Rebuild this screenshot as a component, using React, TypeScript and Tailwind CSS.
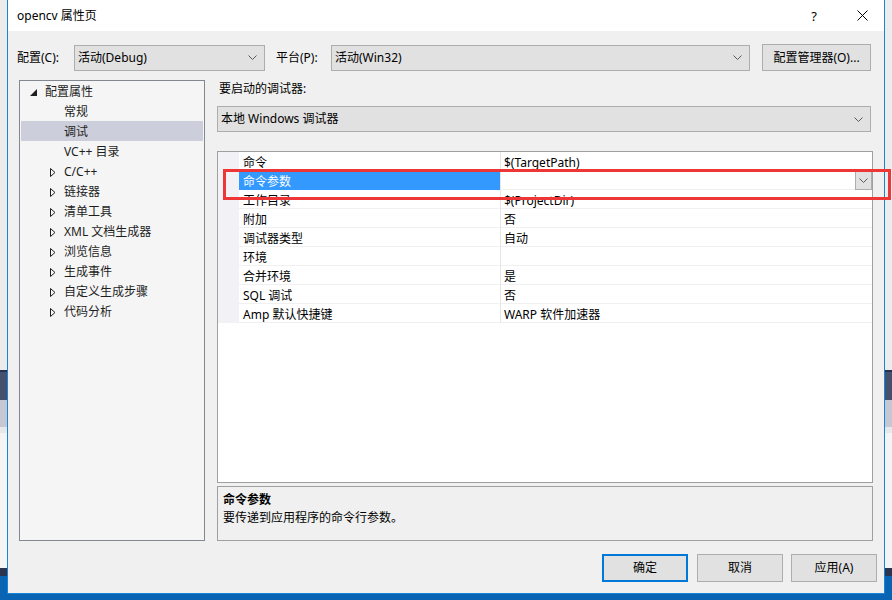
import React from "react";

const Chevron = () => (
  <svg width="9" height="5" viewBox="0 0 9 5" className="block">
    <polyline points="0.5,0.5 4.5,4.5 8.5,0.5" fill="none" stroke="#5a5a5a" strokeWidth="1" />
  </svg>
);

const Expanded = () => (
  <svg width="7" height="7" viewBox="0 0 7 7" className="block">
    <polygon points="7,0 7,7 0,7" fill="#1e1e1e" />
  </svg>
);

const Collapsed = () => (
  <svg width="6" height="9" viewBox="0 0 6 9" className="block">
    <polygon points="0.5,0.5 5,4.5 0.5,8.5" fill="none" stroke="#1e1e1e" strokeWidth="1" />
  </svg>
);

const treeItems: { label: string; kind: "exp" | "col" | "none"; selected?: boolean }[] = [
  { label: "配置属性", kind: "exp" },
  { label: "常规", kind: "none" },
  { label: "调试", kind: "none", selected: true },
  { label: "VC++ 目录", kind: "none" },
  { label: "C/C++", kind: "col" },
  { label: "链接器", kind: "col" },
  { label: "清单工具", kind: "col" },
  { label: "XML 文档生成器", kind: "col" },
  { label: "浏览信息", kind: "col" },
  { label: "生成事件", kind: "col" },
  { label: "自定义生成步骤", kind: "col" },
  { label: "代码分析", kind: "col" },
];

const props: { name: string; value: string; selected?: boolean }[] = [
  { name: "命令", value: "$(TargetPath)" },
  { name: "命令参数", value: "", selected: true },
  { name: "工作目录", value: "$(ProjectDir)" },
  { name: "附加", value: "否" },
  { name: "调试器类型", value: "自动" },
  { name: "环境", value: "" },
  { name: "合并环境", value: "是" },
  { name: "SQL 调试", value: "否" },
  { name: "Amp 默认快捷键", value: "WARP 软件加速器" },
];

export default function App() {
  return (
    <div className="relative w-[892px] h-[600px] overflow-hidden font-['Noto_Sans','Noto_Sans_CJK_SC',sans-serif] text-[12px] leading-4 text-black">
      {/* desktop / IDE behind */}
      <div className="flex flex-col w-full h-full">
        <div className="h-[370px] bg-[#ececec]" />
        <div className="h-[2px] bg-[#26314b]" />
        <div className="h-[28px] bg-[#44506e]" />
        <div className="h-[27px] bg-[#c5c8d2]" />
        <div className="h-[6px] bg-[#e8e8e8]" />
        <div className="h-[135px] bg-[#f4f4f4]" />
        <div className="h-[8px] bg-[#2b3550]" />
        <div className="flex-1 bg-[#0a64b4]" />
      </div>

      {/* dialog window */}
      <div className="absolute left-[7px] top-0 w-[878px] h-[594px] border-x border-b border-[#1883d7] bg-[#f0f0f0] flex flex-col">
        {/* title bar */}
        <div className="h-[31px] bg-white flex items-center pl-[9px] shrink-0">
          <span className="flex-1">opencv 属性页</span>
          <span className="w-[10px] text-center text-[13px] mr-[38px]">?</span>
          <svg width="11" height="11" viewBox="0 0 11 11" className="mr-[16px]">
            <path d="M0.5,0.5 L10.5,10.5 M10.5,0.5 L0.5,10.5" stroke="#000" strokeWidth="1" />
          </svg>
        </div>

        {/* config row */}
        <div className="flex items-center mt-[13px] h-[27px] pl-[9px]">
          <span className="w-[57px]">配置(C):</span>
          <div className="w-[191px] h-[26px] bg-[#e1e1e1] border border-[#adadad] flex items-center pl-[3px] pr-[7px]">
            <span className="flex-1">活动(Debug)</span>
            <Chevron />
          </div>
          <span className="ml-[11px] w-[55px]">平台(P):</span>
          <div className="w-[419px] h-[26px] bg-[#e1e1e1] border border-[#adadad] flex items-center pl-[3px] pr-[7px]">
            <span className="flex-1">活动(Win32)</span>
            <Chevron />
          </div>
          <div className="ml-[12px] w-[109px] h-[27px] bg-[#e1e1e1] border border-[#adadad] flex items-center justify-center">
            配置管理器(O)...
          </div>
        </div>

        {/* main area */}
        <div className="flex mt-[9px] pl-[11px] h-[461px]">
          {/* tree */}
          <div className="w-[186px] h-full border border-[#828790] bg-[#f5f5f5] pt-0 px-px">
            {treeItems.map((t) => (
              <div
                key={t.label}
                className={
                  "h-[20px] flex items-center pt-[2px] text-[#1e1e1e] " + (t.selected ? "bg-[#cccedb]" : "")
                }
              >
                {t.kind === "exp" ? (
                  <>
                    <span className="w-[9px]" />
                    <Expanded />
                    <span className="w-[8px]" />
                  </>
                ) : t.kind === "col" ? (
                  <>
                    <span className="w-[29px]" />
                    <Collapsed />
                    <span className="w-[8px]" />
                  </>
                ) : (
                  <span className="w-[43px]" />
                )}
                <span>{t.label}</span>
              </div>
            ))}
          </div>

          {/* right side */}
          <div className="ml-[12px] w-[656px] flex flex-col">
            <div className="h-[26px] pl-[2px] pt-px">要启动的调试器:</div>
            <div className="w-[654px] h-[26px] bg-[#e1e1e1] border border-[#adadad] flex items-center pl-[3px] pr-[7px]">
              <span className="flex-1">本地 Windows 调试器</span>
              <Chevron />
            </div>

            {/* property grid */}
            <div className="mt-[19px] h-[332px] border border-[#a0a0a0] bg-white flex flex-col">
              {props.map((p) => (
                <div key={p.name} className="h-[19px] flex shrink-0">
                  <div className="w-[21px] bg-[#f2f2f6] shrink-0" />
                  <div
                    className={
                      "w-[261px] flex items-center pl-[4px] pt-[3px] border-b " +
                      (p.selected ? "bg-[#3399ff] text-white border-[#3399ff]" : "border-[#f0f0f0]")
                    }
                  >
                    {p.name}
                  </div>
                  <div className="flex-1 flex items-center pl-[3px] border-l border-b border-l-[#e6e6e6] border-b-[#f0f0f0]">
                    <span className="flex-1 pt-[3px]">{p.value}</span>
                    {p.selected && (
                      <div className="w-[17px] h-[19px] bg-[#e1e1e1] border border-[#adadad] flex items-center justify-center">
                        <Chevron />
                      </div>
                    )}
                  </div>
                </div>
              ))}
            </div>

            {/* description */}
            <div className="mt-[3px] h-[55px] border border-[#a0a0a0] bg-[#f0f0f0] pl-[5px] pt-[3px]">
              <div className="font-bold h-[19px] flex items-center">命令参数</div>
              <div className="h-[18px] flex items-center">要传递到应用程序的命令行参数。</div>
            </div>
          </div>
        </div>

        {/* buttons */}
        <div className="flex justify-end mt-[13px] pr-[7px] gap-[9px]">
          <div className="w-[86px] h-[28px] bg-[#e1e1e1] border-2 border-[#0078d7] flex items-center justify-center">确定</div>
          <div className="w-[86px] h-[28px] bg-[#e1e1e1] border border-[#adadad] flex items-center justify-center">取消</div>
          <div className="w-[86px] h-[28px] bg-[#e1e1e1] border border-[#adadad] flex items-center justify-center -ml-px">应用(A)</div>
        </div>
      </div>

      {/* red annotation rectangle */}
      <div className="absolute left-[223px] top-[169px] w-[668px] h-[31px] border-[3px] border-[#ee3636]" />
    </div>
  );
}
